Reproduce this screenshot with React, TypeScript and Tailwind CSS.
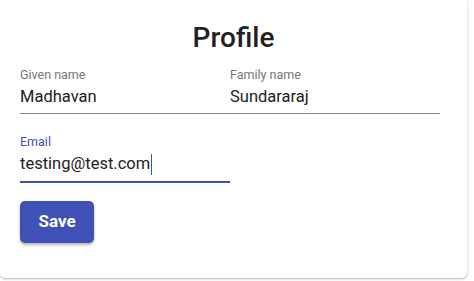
import React from 'react';

// single text field, MUI-like
const Field = ({ label, value, focused }: { label: string, value: string, focused?: boolean }) => {
    return <div className={focused ? "flex flex-col border-b-2 border-[#3f51b5] pb-[5px]" : "flex flex-col border-b border-[#8a8a8a] pb-[4px]"}>
        <div className={focused ? "text-[12.5px] leading-[14px] text-[#3f51b5]" : "text-[12.5px] leading-[14px] text-[#757575]"}>{label}</div>
        <div className="mt-[3px] text-[16.5px] leading-[24px] text-[#212121] flex items-center">
            {value}
            {focused && <span className="inline-block w-px h-[21px] bg-[#3f51b5] ml-[1px]" />}
        </div>
    </div>
}

export default function App() {
    return <div className="w-[474px] h-[281px] bg-white overflow-hidden" style={{ fontFamily: 'Roboto, "Liberation Sans", sans-serif' }}>
        <div className="w-[467px] h-[280px] -mt-[2px] bg-white rounded-[5px] shadow-[0_1px_3px_rgba(0,0,0,0.2),0_1px_1px_rgba(0,0,0,0.12)] pl-[20px] pt-[24px]">
            <h1 className="text-center pr-[20px] text-[28px] leading-[32px] font-medium text-[#212121]">Profile</h1>
            <div className="grid grid-cols-2 w-[420px] mt-[14px]">
                <Field label="Given name" value="Madhavan" />
                <Field label="Family name" value="Sundararaj" />
            </div>
            <div className="w-[210px] mt-[21px]">
                <Field label="Email" value="testing@test.com" focused />
            </div>
            <button className="mt-[18px] w-[74px] h-[42px] rounded-[5px] bg-[#3f51b5] text-white text-[17px] font-bold shadow-[0_2px_3px_rgba(0,0,0,0.3)]">Save</button>
        </div>
    </div>
}
